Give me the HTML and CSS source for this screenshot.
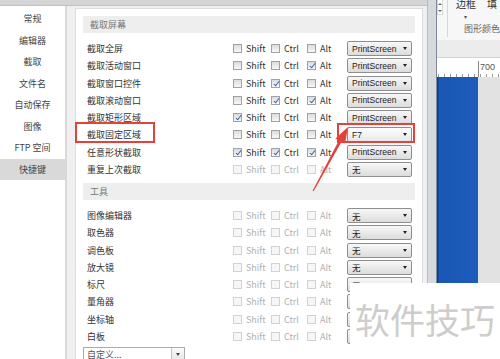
FILE: index.html
```html
<!doctype html>
<html lang="zh-CN">
<head>
  <meta charset="utf-8">
  <title>快捷键</title>
  <link rel="stylesheet" href="styles.css">
</head>
<body>
  <div class="screen">
    <div class="dialog">
      <div class="topband"></div>
      <div class="dialog-body">
        <div class="sidebar">
          <div class="side-item">常规</div>
          <div class="side-item">编辑器</div>
          <div class="side-item">截取</div>
          <div class="side-item">文件名</div>
          <div class="side-item">自动保存</div>
          <div class="side-item">图像</div>
          <div class="side-item">FTP 空间</div>
          <div class="side-item active">快捷键</div>
        </div>
        <div class="content">
          <div class="panel">
            <div class="sec-head">截取屏幕</div>
            <div class="rows">
              <div class="row">
                <span class="name">截取全屏</span>
                <span class="chk"><i class="box"></i>Shift</span>
                <span class="chk"><i class="box"></i>Ctrl</span>
                <span class="chk"><i class="box"></i>Alt</span>
                <span class="select">PrintScreen</span>
              </div>
              <div class="row">
                <span class="name">截取活动窗口</span>
                <span class="chk"><i class="box"></i>Shift</span>
                <span class="chk"><i class="box"></i>Ctrl</span>
                <span class="chk"><i class="box on"></i>Alt</span>
                <span class="select">PrintScreen</span>
              </div>
              <div class="row">
                <span class="name">截取窗口控件</span>
                <span class="chk"><i class="box"></i>Shift</span>
                <span class="chk"><i class="box on"></i>Ctrl</span>
                <span class="chk"><i class="box"></i>Alt</span>
                <span class="select">PrintScreen</span>
              </div>
              <div class="row">
                <span class="name">截取滚动窗口</span>
                <span class="chk"><i class="box"></i>Shift</span>
                <span class="chk"><i class="box on"></i>Ctrl</span>
                <span class="chk"><i class="box on"></i>Alt</span>
                <span class="select">PrintScreen</span>
              </div>
              <div class="row">
                <span class="name">截取矩形区域</span>
                <span class="chk"><i class="box on"></i>Shift</span>
                <span class="chk"><i class="box"></i>Ctrl</span>
                <span class="chk"><i class="box"></i>Alt</span>
                <span class="select">PrintScreen</span>
              </div>
              <div class="row">
                <span class="name">截取固定区域</span>
                <span class="chk"><i class="box"></i>Shift</span>
                <span class="chk"><i class="box"></i>Ctrl</span>
                <span class="chk"><i class="box"></i>Alt</span>
                <span class="select light">F7</span>
              </div>
              <div class="row">
                <span class="name">任意形状截取</span>
                <span class="chk"><i class="box on"></i>Shift</span>
                <span class="chk"><i class="box on"></i>Ctrl</span>
                <span class="chk"><i class="box on"></i>Alt</span>
                <span class="select">PrintScreen</span>
              </div>
              <div class="row off">
                <span class="name">重复上次截取</span>
                <span class="chk"><i class="box"></i>Shift</span>
                <span class="chk"><i class="box"></i>Ctrl</span>
                <span class="chk"><i class="box"></i>Alt</span>
                <span class="select">无</span>
              </div>
            </div>

            <div class="sec-head second">工具</div>
            <div class="rows">
              <div class="row off">
                <span class="name">图像编辑器</span>
                <span class="chk"><i class="box"></i>Shift</span>
                <span class="chk"><i class="box"></i>Ctrl</span>
                <span class="chk"><i class="box"></i>Alt</span>
                <span class="select">无</span>
              </div>
              <div class="row off">
                <span class="name">取色器</span>
                <span class="chk"><i class="box"></i>Shift</span>
                <span class="chk"><i class="box"></i>Ctrl</span>
                <span class="chk"><i class="box"></i>Alt</span>
                <span class="select">无</span>
              </div>
              <div class="row off">
                <span class="name">调色板</span>
                <span class="chk"><i class="box"></i>Shift</span>
                <span class="chk"><i class="box"></i>Ctrl</span>
                <span class="chk"><i class="box"></i>Alt</span>
                <span class="select">无</span>
              </div>
              <div class="row off">
                <span class="name">放大镜</span>
                <span class="chk"><i class="box"></i>Shift</span>
                <span class="chk"><i class="box"></i>Ctrl</span>
                <span class="chk"><i class="box"></i>Alt</span>
                <span class="select">无</span>
              </div>
              <div class="row off">
                <span class="name">标尺</span>
                <span class="chk"><i class="box"></i>Shift</span>
                <span class="chk"><i class="box"></i>Ctrl</span>
                <span class="chk"><i class="box"></i>Alt</span>
                <span class="select">无</span>
              </div>
              <div class="row off">
                <span class="name">量角器</span>
                <span class="chk"><i class="box"></i>Shift</span>
                <span class="chk"><i class="box"></i>Ctrl</span>
                <span class="chk"><i class="box"></i>Alt</span>
                <span class="select">无</span>
              </div>
              <div class="row off">
                <span class="name">坐标轴</span>
                <span class="chk"><i class="box"></i>Shift</span>
                <span class="chk"><i class="box"></i>Ctrl</span>
                <span class="chk"><i class="box"></i>Alt</span>
                <span class="select">无</span>
              </div>
              <div class="row off">
                <span class="name">白板</span>
                <span class="chk"><i class="box"></i>Shift</span>
                <span class="chk"><i class="box"></i>Ctrl</span>
                <span class="chk"><i class="box"></i>Alt</span>
                <span class="select">无</span>
              </div>
            </div>

            <div class="custom"><span>自定义...</span><b class="custom-btn"></b></div>
          </div>
        </div>
      </div>
    </div>

    <div class="frame"></div>

    <div class="app">
      <div class="ribbon">
        <div class="spin"><span class="up"></span><span class="down"></span></div>
        <div class="sep"></div>
        <div class="group">
          <div class="g-top">
            <span class="g-btn">边框<small>▾</small></span>
            <span class="g-btn">填</span>
          </div>
          <div class="g-name">图形颜色</div>
        </div>
      </div>
      <div class="band"></div>
      <div class="ruler"><span>700</span></div>
      <div class="canvas">
        <div class="blue"></div>
        <div class="paper"></div>
      </div>
    </div>

    <!-- annotations drawn over the screenshot -->
    <div class="mark mark-label"></div>
    <div class="mark mark-key"></div>
    <svg class="arrow" width="500" height="359" viewBox="0 0 500 359">
      <polygon points="312.6,190.8 339,140.3 335.5,138.4 348,127 345.1,143.6 341.6,141.7 313.6,191.3" fill="#e5403a"/>
    </svg>
    <div class="watermark">软件技巧</div>
  </div>
</body>
</html>
```

FILE: styles.css
```css
*{box-sizing:border-box}
html,body{margin:0;height:100%}
body{font-family:"Noto Sans CJK SC","Liberation Sans",sans-serif;font-size:9px;color:#333;background:#fff}

.screen{position:relative;width:500px;height:359px;overflow:hidden;display:flex}

/* dialog */
.dialog{width:427px;display:flex;flex-direction:column;background:#f0f0f0}
.topband{height:6px;background:#d5d5d5;border-bottom:1px solid #c2c2c2}
.dialog-body{flex:1;display:flex;min-height:0}

.sidebar{width:67px;background:#fff;border-right:2px solid #d9d9d9;padding-top:2.25px}
.side-item{height:21.5px;line-height:21.5px;text-align:center;color:#444}
.side-item.active{background:#d9d9d9}

.content{flex:1;padding:2px 4px 0 8px;min-height:0}
.panel{height:100%;background:#fff;border:1px solid #dedede;border-bottom:none;padding:7px 7px 0}

.sec-head{height:17px;line-height:17px;background:#eeeeee;color:#777;padding-left:7px}
.sec-head.second{margin-top:5px}
.rows{margin-top:7px}

.row{display:grid;grid-template-columns:150px 38px 36px 40px 65px;align-items:center;height:17.25px}
.name{padding-left:4px;white-space:nowrap}

.chk{display:flex;align-items:center;gap:4px;color:#333}
.box{position:relative;width:9px;height:9px;border:1px solid #a2a2a2;background:linear-gradient(#dcdcdc,#f7f7f7)}
.box.on::after{content:"";position:absolute;left:2.5px;top:0;width:2px;height:5px;border:solid #3563b4;border-width:0 1.5px 1.5px 0;transform:rotate(38deg)}
.off .chk{color:#b0b0b0}
.off .box{border-color:#d2d2d2;background:#f6f6f6}

.select{height:15px;border:1px solid #8e8e8e;border-radius:2px;background:linear-gradient(#f8f8f8,#dcdcdc);padding:0 4px;display:flex;align-items:center;justify-content:space-between;color:#222;font-family:"Liberation Sans","Noto Sans CJK SC",sans-serif;font-size:8.5px}
.select::after{content:"";border-left:2.5px solid transparent;border-right:2.5px solid transparent;border-top:3px solid #222}
.select.light{background:linear-gradient(#fdfdfd,#e8e8e8)}

.custom{margin-top:2px;width:102px;height:15px;border:1px solid #ababab;display:flex;align-items:center;justify-content:space-between;color:#555;padding-left:3px}
.custom-btn{width:13px;height:100%;border-left:1px solid #c4c4c4;background:linear-gradient(#fafafa,#e6e6e6);display:flex;align-items:center;justify-content:center}
.custom-btn::after{content:"";border-left:2.5px solid transparent;border-right:2.5px solid transparent;border-top:3px solid #444}

/* window frame between dialog and the app behind */
.frame{width:10px;background:#d6d9dd;border-left:1px solid #b8bcc2;border-right:1px solid #7d8a9c}

/* app behind */
.app{flex:1;display:flex;flex-direction:column;background:#f5f5f5;min-width:0}
.ribbon{height:40px;display:flex;background:#f7f7f7;overflow:hidden}
.spin{width:10px;height:15px;display:flex;flex-direction:column;align-items:center;justify-content:space-around;background:#fff;border:1px solid #d8d8d8;border-top:none}
.spin .up{border-left:2px solid transparent;border-right:2px solid transparent;border-bottom:2.5px solid #666}
.spin .down{border-left:2px solid transparent;border-right:2px solid transparent;border-top:2.5px solid #666}
.sep{width:1px;height:37px;margin-left:4px;background:#d6d6d6}
.group{flex:1;padding-left:8px;white-space:nowrap}
.g-top{display:flex;gap:11px;margin-top:-2px;height:26px}
.g-btn{display:flex;flex-direction:column;align-items:center;line-height:11px;color:#333;font-size:10px}
.g-btn small{font-size:6px;color:#555;line-height:9px;margin-top:3px}
.g-name{padding-left:8px;color:#666;line-height:10px}

.band{height:17px;background:#ececec}
.ruler{height:20px;background:#fff repeating-linear-gradient(to right,#999 0 1px,transparent 1px 6px) 1px 100%/100% 3px no-repeat;border-top:1px solid #d4d4d4;padding-left:41px;padding-top:2px}
.ruler span{display:inline-block;border-left:1px solid #888;height:16px;padding-left:1px;font-family:"Liberation Sans",sans-serif;font-size:9px;color:#555;line-height:12px}

.canvas{flex:1;display:flex}
.blue{width:41px;background:linear-gradient(to right,#0a2f6e 0,#1b57b4 2px,#1c5cbc 100%)}
.paper{flex:1;background:#e2e2e2}

/* annotations */
.mark{position:absolute;border:2px solid #e5403a}
.mark-label{left:75px;top:122px;width:80px;height:21px}
.mark-key{left:337px;top:123px;width:78px;height:20px}
.arrow{position:absolute;left:0;top:0;pointer-events:none}

.watermark{position:absolute;left:350px;top:283px;right:0;bottom:0;background:#fff;padding:16px 0 0 5px;font-size:35px;line-height:40px;color:#cdcdcd;white-space:nowrap}
```
